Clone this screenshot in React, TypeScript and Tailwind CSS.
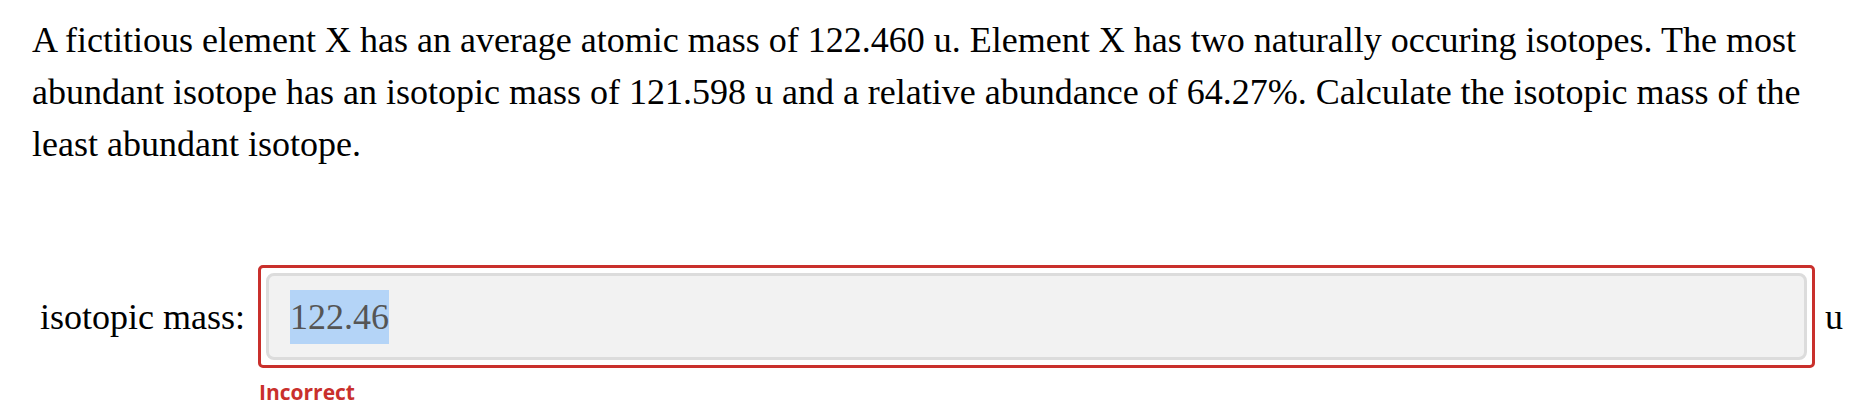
import * as React from "react";

const serif = { fontFamily: '"Liberation Serif", "Times New Roman", Times, serif' };

export default function App() {
  const unit = "u";

  return (
    <div className="w-[1852px] h-[404px] overflow-hidden bg-white text-black" style={serif}>
      {/* question text */}
      <p className="px-8 pt-[14px] text-[36px] leading-[52px]">
        A fictitious element X has an average atomic mass of 122.460 u. Element X has two naturally
        occuring isotopes. The most abundant isotope has an isotopic mass of 121.598 u and a relative
        abundance of 64.27%. Calculate the isotopic mass of the least abundant isotope.
      </p>

      {/* answer row */}
      <div className="mt-[95px] flex items-start pl-[40px] pr-[9px]">
        <label htmlFor="isotopic-mass" className="h-[103px] flex items-center text-[36px] mr-[13px]">
          isotopic mass:
        </label>

        <div className="flex-1 flex flex-col">
          <div className="h-[103px] rounded-[5px] border-[3px] border-[#c9302c] p-[5px]">
            <div
              id="isotopic-mass"
              className="h-full rounded-[8px] border-[3px] border-[#dcdcdc] bg-[#f2f2f2] pl-[21px] flex items-center"
            >
              <span className="inline-block h-[54px] leading-[54px] bg-[#b4d4f7] text-[#555555] text-[36px]">
                122.46
              </span>
            </div>
          </div>
          <span
            className="mt-[14px] ml-[1px] text-[21px] leading-[21px] font-bold text-[#c9302c]"
            style={{ fontFamily: '"Open Sans", "Noto Sans", sans-serif' }}
          >
            Incorrect
          </span>
        </div>

        <span className="h-[103px] flex items-center ml-[10px] text-[36px]">{unit}</span>
      </div>
    </div>
  );
}
